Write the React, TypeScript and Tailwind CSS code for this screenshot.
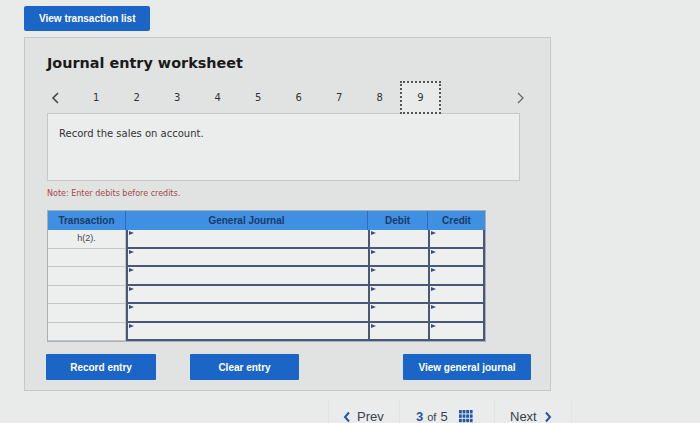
import React from "react";

const dv = { fontFamily: '"DejaVu Sans", Verdana, sans-serif' };
const ar = { fontFamily: '"Liberation Sans", Arial, sans-serif' };

function Flag() {
  return (
    <svg className="absolute left-[1px] top-[1px]" width="5" height="5" viewBox="0 0 5 5">
      <path d="M0 0 L5 2 L0 4 Z" fill="#3a4f80" />
    </svg>
  );
}

function InputCell() {
  return (
    <div className="relative h-full bg-[#eef0f0] border-l-2 border-b-2 border-[#4a5878]">
      <Flag />
    </div>
  );
}

export default function App() {
  const nums = ["1", "2", "3", "4", "5", "6", "7", "8"];
  const rows = ["h(2).", "", "", "", "", ""];
  return (
    <div className="w-[700px] h-[423px] overflow-hidden bg-[#e9ebea] pl-[24px] pt-[5px]" style={ar}>
      <button className="w-[126px] h-[25px] bg-[#1b65c6] rounded-[2px] text-white text-[10px] font-bold text-left pl-[15px]">
        View transaction list
      </button>

      <div className="mt-[6px] w-[527px] h-[354px] border border-[#c5c8c8] bg-[#e1e3e3] pl-[22px] pt-[15px]">
        <div className="text-[14.4px] leading-[20px] font-bold text-[#1a1a1a]" style={dv}>
          Journal entry worksheet
        </div>

        <div className="mt-[8px] h-[33px] flex items-center text-[10px] text-[#333]" style={dv}>
          <div className="w-[29px] pl-[4px] text-[#444]">
            <svg width="9" height="12" viewBox="0 0 9 12">
              <path d="M7 1 L2 6 L7 11" stroke="#444" strokeWidth="1.6" fill="none" />
            </svg>
          </div>
          {nums.map((n) => (
            <div key={n} className="w-[40.5px] text-center">
              {n}
            </div>
          ))}
          <div className="w-[41px] h-[33px] border-2 border-dotted border-[#555] flex items-center justify-center bg-[#e9ebeb]">
            9
          </div>
          <div className="ml-[75px]">
            <svg width="9" height="12" viewBox="0 0 9 12">
              <path d="M2 1 L7 6 L2 11" stroke="#666" strokeWidth="1.3" fill="none" />
            </svg>
          </div>
        </div>

        <div className="-mt-[1px] w-[473px] h-[68px] border border-[#c5c8c8] bg-[#ebeded] pl-[11px] pt-[14px] text-[10px] leading-[12px] text-[#333]" style={dv}>
          Record the sales on account.
        </div>

        <div className="mt-[8px] text-[8px] leading-[10px] text-[#a44848]" style={dv}>
          Note: Enter debits before credits.
        </div>

        <div className="mt-[11px] w-[439px] border border-[#a9b0b5]">
          <div className="grid grid-cols-[78px_242px_60px_57px] h-[19px] bg-[#3f8fe2] text-[10px] font-bold text-[#1d3a66]">
            <div className="flex items-center justify-center border-r border-[#2d6cb8]">Transaction</div>
            <div className="flex items-center justify-center border-r border-[#2d6cb8]">General Journal</div>
            <div className="flex items-center justify-center border-r border-[#2d6cb8]">Debit</div>
            <div className="flex items-center justify-center">Credit</div>
          </div>
          {rows.map((r, i) => (
            <div key={i} className="grid grid-cols-[78px_242px_60px_57px] h-[18.5px]">
              <div className="flex items-center justify-center bg-[#edefef] border-b border-r border-[#c2c6c6] text-[9px] text-[#444] pb-[1px]">
                {r}
              </div>
              <InputCell />
              <InputCell />
              <div className="border-r-2 border-[#4a5878] h-full">
                <InputCell />
              </div>
            </div>
          ))}
        </div>

        <div className="mt-[12px] -ml-[1px] flex">
          <button className="w-[110px] h-[26px] bg-[#1b65c6] text-white text-[10px] font-bold rounded-[1px]">
            Record entry
          </button>
          <button className="ml-[34px] w-[109px] h-[26px] bg-[#1b65c6] text-white text-[10px] font-bold rounded-[1px]">
            Clear entry
          </button>
          <button className="ml-[104px] w-[128px] h-[26px] bg-[#1b65c6] text-white text-[10px] font-bold rounded-[1px]">
            View general journal
          </button>
        </div>
      </div>

      <div className="mt-[10px] ml-[304px] flex h-[30px] text-[13px] text-[#3a3f4a]">
        <div className="w-[72px] border-l border-r border-[#e2e4e4] bg-[#eaecec] flex items-start pt-[8px] pl-[14px] gap-[6px]">
          <svg width="8" height="12" viewBox="0 0 8 12" className="mt-[2px]">
            <path d="M6 1.5 L2 6 L6 10.5" stroke="#2456a8" strokeWidth="2" fill="none" />
          </svg>
          <span className="leading-[15px]">Prev</span>
        </div>
        <div className="w-[95px] border-r border-[#e2e4e4] bg-[#eaecec] flex items-start pt-[8px] pl-[16px] leading-[15px]">
          <span className="font-bold text-[#2456a8]">3</span>
          <span className="ml-[4px] text-[11px] mt-[1px]">of</span>
          <span className="ml-[4px]">5</span>
          <svg width="14" height="13" viewBox="0 0 14 13" className="ml-[11px] mt-[1px]">
            {[0, 1, 2].map((r) =>
              [0, 1, 2, 3].map((c) => (
                <rect key={`${r}-${c}`} x={c * 3.6} y={r * 4.4} width="2.8" height="3.4" fill="#2456a8" />
              ))
            )}
          </svg>
        </div>
        <div className="w-[77px] border-r border-[#e2e4e4] bg-[#eaecec] flex items-start pt-[8px] pl-[15px] gap-[7px]">
          <span className="leading-[15px]">Next</span>
          <svg width="8" height="12" viewBox="0 0 8 12" className="mt-[2px]">
            <path d="M2 1.5 L6 6 L2 10.5" stroke="#2456a8" strokeWidth="2" fill="none" />
          </svg>
        </div>
      </div>
    </div>
  );
}
